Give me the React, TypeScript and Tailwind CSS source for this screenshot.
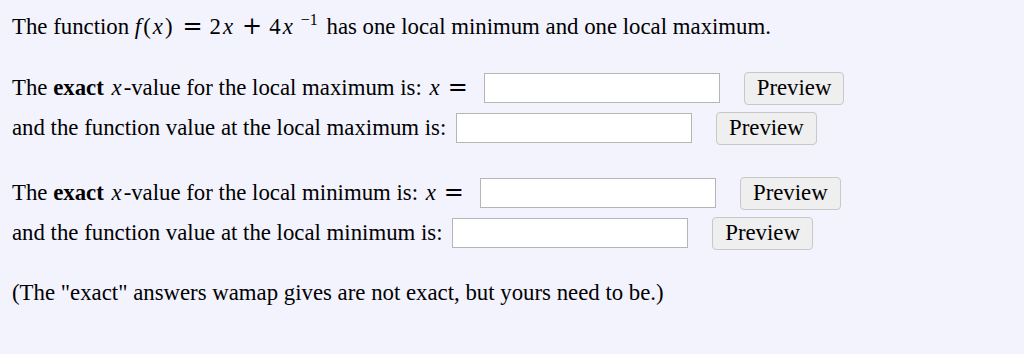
const serif = { fontFamily: '"Liberation Serif", "Times New Roman", serif' }

function X() {
  return <i className="mx-[2px]">x</i>
}

function Op({ children, className = '' }: { children: React.ReactNode; className?: string }) {
  return <span className={`font-['DejaVu_Serif',serif] text-[24px] leading-none ${className}`}>{children}</span>
}

function AnswerRow({ label, inputMargin }: { label: React.ReactNode; inputMargin: string }) {
  return (
    <div className="flex items-center h-[40px]">
      <span className="whitespace-pre">{label}</span>
      <input type="text" className={`${inputMargin} w-[236px] h-[30px] bg-white border border-[#b5b5b5] outline-none`} />
      <button className="ml-[24px] h-[33px] px-[12px] bg-[#efefef] border border-[#c8c8c8] rounded-[4px] text-[22.8px] leading-none text-black">
        Preview
      </button>
    </div>
  )
}

export default function App() {
  return (
    <div className="w-[1024px] h-[354px] bg-[#f3f3fe] text-black text-[22.8px] px-3 pt-[7px] overflow-hidden" style={serif}>
      <div className="flex items-center h-[40px] whitespace-pre">
        <span>The function </span>
        <span>
          <i className="mr-[2px]">f</i>(<X />)<Op className="ml-[10px] mr-[7px]">=</Op>2<X />
          <Op className="mx-[7px]">+</Op>4<X />
          <sup className="-top-[9px] ml-[6px] text-[16px]">−1</sup>
        </span>
        <span className="ml-[3px]"> has one local minimum and one local maximum.</span>
      </div>

      <div className="mt-[21px]">
        <AnswerRow
          label={<>The <b>exact</b> <X />-value for the local maximum is: <X /><Op className="ml-[6px]">=</Op></>}
          inputMargin="ml-[16px]"
        />
        <AnswerRow label={<>and the function value at the local maximum is: </>} inputMargin="ml-[4px]" />
      </div>

      <div className="mt-[25px]">
        <AnswerRow
          label={<>The <b>exact</b> <X />-value for the local minimum is: <X /><Op className="ml-[6px]">=</Op></>}
          inputMargin="ml-[16px]"
        />
        <AnswerRow label={<>and the function value at the local minimum is: </>} inputMargin="ml-[4px]" />
      </div>

      <div className="mt-[20px] flex items-center h-[40px]">
        (The "exact" answers wamap gives are not exact, but yours need to be.)
      </div>
    </div>
  )
}
